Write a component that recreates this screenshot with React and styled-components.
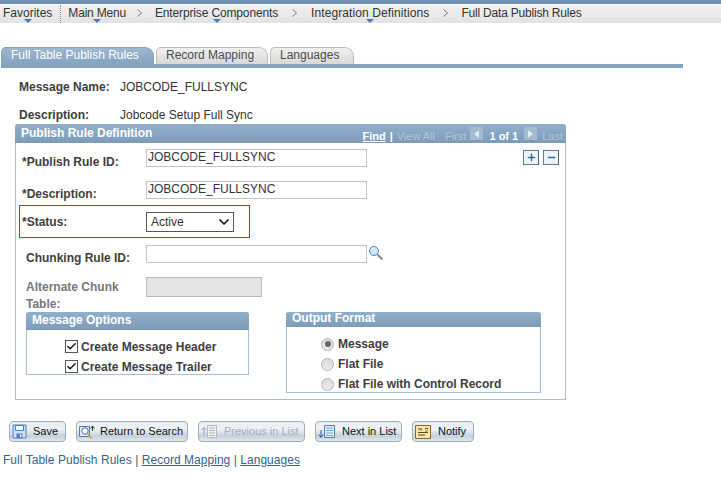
import React from 'react';
import styled, { createGlobalStyle } from 'styled-components';
import { Check, ChevronDown, Minus, Plus } from 'lucide-react';

const GlobalStyle = createGlobalStyle`
  html, body {
    margin: 0;
    padding: 0;
    background: #fff;
    font-family: "Liberation Sans", Arial, sans-serif;
    font-size: 12px;
    color: #333;
  }
`;

const Page = styled.div`
  width: 721px;
  height: 477px;
  overflow: hidden;
`;

const TopStrip = styled.div`
  height: 4px;
  background: #6d90b6;
  border-bottom: 1px solid #fff;
`;

const Nav = styled.nav`
  display: flex;
  height: 18px;
  background: linear-gradient(#f2f2f2, #e2e2e2);
  align-items: flex-start;
`;

const NavItem = styled.div`
  position: relative;
  margin-left: ${p => p.$left}px;
  padding-top: 1px;
  line-height: 14px;
  letter-spacing: ${p => p.$spacing ?? 0}px;
  color: #333;
  white-space: nowrap;

  &::after {
    content: '';
    display: ${p => (p.$drop ? 'block' : 'none')};
    position: absolute;
    left: ${p => p.$drop}px;
    top: 14px;
    border-left: 4px solid transparent;
    border-right: 4px solid transparent;
    border-top: 4px solid #4d7cb5;
  }
`;

const NavDivider = styled.div`
  width: 0;
  height: 18px;
  margin-left: 8px;
  border-left: 1px dotted #888;
`;

const Chevron = styled.svg`
  flex: none;
  width: 5px;
  height: 8px;
  margin: 4px 0 0 ${p => p.$left}px;
  fill: none;
  stroke: #6f7780;
`;

const TabRow = styled.div`
  display: flex;
  gap: 2px;
  margin: 24px 0 0 1px;
  height: 17px;
`;

const Tab = styled.div`
  width: ${p => p.$width}px;
  height: 17px;
  box-sizing: border-box;
  padding-left: 9px;
  line-height: 15px;
  border-radius: 5px 9px 0 0;
  white-space: nowrap;
  color: ${p => (p.$active ? '#fff' : '#4d4d4d')};
  background: ${p =>
    p.$active ? 'linear-gradient(#9cb7cf, #86a4bf)' : 'linear-gradient(#f0f0f0, #d8d8d8)'};
  border: 1px solid ${p => (p.$active ? '#86a4bf' : '#bdbdbd')};
  border-bottom: 0;
`;

const TabLine = styled.div`
  width: 682px;
  margin-left: 1px;
  height: 4px;
  background: #86a4bf;
`;

const InfoRow = styled.div`
  display: flex;
  padding-left: 19px;
  height: 14px;
  line-height: 14px;
  margin-top: ${p => p.$top}px;
`;

const InfoLabel = styled.div`
  width: 101px;
  font-weight: bold;
  color: #3e3e3e;
`;

const Panel = styled.section`
  width: 551px;
  height: 276px;
  box-sizing: border-box;
  margin: 2px 0 0 15px;
  border: 1px solid #a8bfd8;
  border-top: 0;
  border-radius: 3px 3px 0 0;
`;

const PanelHeader = styled.div`
  display: flex;
  align-items: center;
  justify-content: space-between;
  height: 19px;
  margin: 0 -1px;
  padding: 0 3px 1px 6px;
  box-sizing: border-box;
  border-radius: 3px 3px 0 0;
  background: linear-gradient(#92afc9, #7c9cba);
  color: #fff;
  font-weight: bold;
  line-height: 14px;
`;

const Pager = styled.div`
  position: relative;
  display: flex;
  align-items: center;
  top: 3px;
  font-size: 11px;
  font-weight: normal;
  color: #b4c4d4;
  white-space: nowrap;
`;

const PagerFind = styled.span`
  color: #fff;
  font-weight: bold;
  text-decoration: underline;
`;

const PagerSep = styled.span`
  color: #fff;
  font-weight: bold;
  margin: 0 4px 0 4px;
`;

const PagerGap = styled.span`
  margin-left: ${p => p.$left}px;
`;

const PagerCount = styled.span`
  color: #fff;
  font-weight: bold;
  margin: 0 6px;
`;

const PagerArrow = styled.span`
  display: flex;
  align-items: center;
  justify-content: center;
  width: 13px;
  height: 13px;
  margin: -5px 0 0 ${p => p.$left ?? 0}px;
  background: #a3bacf;

  &::after {
    content: '';
    border-top: 4px solid transparent;
    border-bottom: 4px solid transparent;
    ${p =>
      p.$dir === 'left'
        ? 'border-right: 5px solid #e2eaf1;'
        : 'border-left: 5px solid #e2eaf1;'}
  }
`;

const FieldRow = styled.div`
  position: relative;
  display: flex;
  align-items: flex-start;
  height: ${p => p.$height}px;
  margin-top: ${p => p.$top ?? 0}px;
`;

const FieldLabel = styled.div`
  width: 130px;
  flex: none;
  box-sizing: border-box;
  padding-left: ${p => (p.$required ? 6 : 10)}px;
  font-weight: bold;
  color: ${p => (p.$muted ? '#777' : '#3e3e3e')};
  line-height: 17px;
  position: relative;
  top: ${p => p.$shift ?? 0}px;
`;

const LabelText = styled.div`
  width: 100px;
`;

const TextField = styled.div`
  width: ${p => p.$width}px;
  height: ${p => p.$height}px;
  box-sizing: border-box;
  padding-left: 1px;
  border: 1px solid ${p => (p.$disabled ? '#bbb' : '#c4c4c4')};
  background: ${p => (p.$disabled ? '#e4e4e4' : '#fff')};
  color: #333;
  line-height: 15px;
`;

const RowButtons = styled.div`
  position: absolute;
  top: 1px;
  right: 6px;
  display: flex;
  gap: 4px;
`;

const SquareButton = styled.div`
  display: flex;
  align-items: center;
  justify-content: center;
  width: 14px;
  height: 13px;
  border: 1px solid #5d7f96;
  border-right-color: #44637a;
  background: #eef3f7;
  color: #2f6fa8;
`;

const StatusBox = styled.div`
  display: flex;
  align-items: center;
  width: 231px;
  height: 33px;
  box-sizing: border-box;
  margin: 6px 0 0 3px;
  border: 1px solid #e0202c;
`;

const StatusLabel = styled(FieldLabel)`
  width: 126px;
  padding-left: 2px;
`;

const SelectBox = styled.div`
  display: flex;
  align-items: center;
  justify-content: space-between;
  width: 88px;
  height: 20px;
  box-sizing: border-box;
  padding: 0 1px 0 4px;
  border: 1px solid #555;
  color: #333;
`;

const SelectText = styled.span`
  padding-top: 1px;
`;

const GroupRow = styled.div`
  display: flex;
  align-items: flex-start;
  margin: 15px 0 0 10px;
`;

const Group = styled.div`
  width: ${p => p.$width}px;
  height: ${p => p.$height}px;
  margin-left: ${p => p.$left ?? 0}px;
  box-sizing: border-box;
  border: 1px solid #a8bfd8;
  border-top: 0;
  border-radius: 3px 3px 0 0;
`;

const GroupHeader = styled.div`
  height: ${p => p.$height}px;
  margin: 0 -1px;
  padding-left: 6px;
  border-radius: 3px 3px 0 0;
  background: linear-gradient(#92afc9, #7c9cba);
  color: #fff;
  font-weight: bold;
  line-height: ${p => p.$height - 2}px;
`;

const OptionList = styled.div`
  display: flex;
  flex-direction: column;
  padding: ${p => p.$top}px 0 0 ${p => p.$left}px;
  gap: ${p => p.$gap}px;
`;

const Option = styled.div`
  display: flex;
  align-items: center;
  gap: ${p => p.$gap ?? 3}px;
  height: 14px;
  font-weight: bold;
  color: #3e3e3e;
  white-space: nowrap;
`;

const CheckMark = styled.span`
  display: flex;
  align-items: center;
  justify-content: center;
  width: 13px;
  height: 13px;
  margin-bottom: 2px;
  box-sizing: border-box;
  border: 1px solid #555;
  background: #fff;
  color: #111;
`;

const Radio = styled.span`
  display: flex;
  align-items: center;
  justify-content: center;
  width: 11px;
  height: 11px;
  margin-right: 1px;
  border: 1px solid #b3b3b3;
  border-radius: 50%;
  background: linear-gradient(#dcdcdc, #ececec);

  &::after {
    content: '';
    display: ${p => (p.$on ? 'block' : 'none')};
    width: 6px;
    height: 6px;
    border-radius: 50%;
    background: #666;
  }
`;

const Toolbar = styled.div`
  display: flex;
  gap: 10px;
  margin: 21px 0 0 9px;
`;

const ToolButton = styled.div`
  display: flex;
  align-items: center;
  width: ${p => p.$width}px;
  height: 21px;
  box-sizing: border-box;
  padding-left: 2px;
  border: 1px solid #a3adb8;
  border-radius: 4px;
  background: linear-gradient(#e8edf3 0%, #eef2f6 35%, #c7d1dd 75%, #e3e8ee 100%);
  color: ${p => (p.$disabled ? '#a8adb3' : '#111')};
  white-space: nowrap;
  font-size: 11px;
`;

const ToolLabel = styled.span`
  margin: 0 0 2px ${p => p.$gap}px;
`;

const FooterLinks = styled.div`
  margin: 11px 0 0 3px;
  line-height: 14px;
  letter-spacing: 0.04px;
  color: #3a5f8c;
`;

const FooterLink = styled.a`
  color: #3a5f8c;
  text-decoration: underline;
`;

const LookupSlot = styled.span`
  display: flex;
  margin-left: 1px;
`;

const NavChevron = ({ left }) => (
  <Chevron $left={left} viewBox="0 0 5 8">
    <path d="M.5 .5L4.500 4 .5 7.500" />
  </Chevron>
);

const SaveIcon = () => (
  <svg width="15" height="15" viewBox="0 0 15 15">
    <path d="M1 1h13v13H1z" fill="#cfe0f5" stroke="#4a7fc4" />
    <path d="M3.500 1.500h8v5h-8z" fill="#fff" stroke="#4a7fc4" />
    <path d="M4.500 9.500h6v4.500h-6z" fill="#4a7fc4" />
    <path d="M8 10.500h1.500v2.500H8z" fill="#fff" />
  </svg>
);

const SearchIcon = () => (
  <svg width="17" height="16" viewBox="0 0 17 16">
    <path d="M.5 2.500h10v10H.5z" fill="#dfe9f7" stroke="#4a7fc4" />
    <circle cx="6" cy="7" r="3.200" fill="#fff" stroke="#4a6f96" />
    <path d="M8.500 9.500l4 5" stroke="#c9a14a" strokeWidth="2" />
    <path d="M13.500 7V2.500M11.500 4.500l2-2.500 2 2.500" fill="none" stroke="#333" />
  </svg>
);

const PrevIcon = () => (
  <svg width="17" height="15" viewBox="0 0 17 15">
    <path d="M6.500 1.500h9v12h-9z" fill="#eef0f2" stroke="#b5b9bd" />
    <path d="M8 4h6M8 6.500h6M8 9h6M8 11.500h6" stroke="#b5b9bd" />
    <path d="M3 11V4M1 6l2-3 2 3" fill="none" stroke="#a5a9ad" />
  </svg>
);

const NextIcon = () => (
  <svg width="18" height="15" viewBox="0 0 18 15">
    <path d="M6.500 1.500h10v12h-10z" fill="#e3edfa" stroke="#4a7fc4" />
    <path d="M8 4h7M8 6.500h7M8 9h7M8 11.500h7" stroke="#7ba4d8" />
    <path d="M3 6v7M1 10.500l2 3 2-3" fill="none" stroke="#2b5d99" />
  </svg>
);

const NotifyIcon = () => (
  <svg width="16" height="14" viewBox="0 0 16 14">
    <path d="M.5 .5h15v13H.5z" fill="#f4e7a8" stroke="#8a6a2c" />
    <path d="M3 4h4l-1 1.500M10 3.500h3M3 7.500h10M3 10h7" fill="none" stroke="#6b4a1e" />
    <path d="M10 5.500l1.500 1L13 4.500" fill="none" stroke="#4f9a3a" />
  </svg>
);

const LookupIcon = () => (
  <svg width="16" height="16" viewBox="0 0 16 16">
    <circle cx="6" cy="6" r="4.500" fill="#cfe6f8" stroke="#4d86b8" />
    <path d="M3.500 5a2.500 2.500 0 0 1 2.500-2" fill="none" stroke="#fff" />
    <path d="M9.500 9.500l5 5" stroke="#8a8f94" strokeWidth="2.200" />
  </svg>
);

const App = () => {
  return (
    <Page>
      <GlobalStyle />
      <TopStrip />
      <Nav>
        <NavItem $left={3} $drop={21}>Favorites</NavItem>
        <NavDivider />
        <NavItem $left={7} $drop={25} $spacing={-0.2}>Main Menu</NavItem>
        <NavChevron left={11} />
        <NavItem $left={13} $drop={58} $spacing={-0.14}>Enterprise Components</NavItem>
        <NavChevron left={14} />
        <NavItem $left={14} $drop={55} $spacing={0.1}>Integration Definitions</NavItem>
        <NavChevron left={14} />
        <NavItem $left={13} $spacing={-0.2}>Full Data Publish Rules</NavItem>
      </Nav>

      <TabRow>
        <Tab $active $width={153}>Full Table Publish Rules</Tab>
        <Tab $width={112}>Record Mapping</Tab>
        <Tab $width={84}>Languages</Tab>
      </TabRow>
      <TabLine />

      <InfoRow $top={12}>
        <InfoLabel>Message Name:</InfoLabel>
        <span>JOBCODE_FULLSYNC</span>
      </InfoRow>
      <InfoRow $top={14}>
        <InfoLabel>Description:</InfoLabel>
        <span>Jobcode Setup Full Sync</span>
      </InfoRow>

      <Panel>
        <PanelHeader>
          <span>Publish Rule Definition</span>
          <Pager>
            <PagerFind>Find</PagerFind>
            <PagerSep>|</PagerSep>
            View All
            <PagerGap $left={10}>First</PagerGap>
            <PagerArrow $dir="left" $left={4} />
            <PagerCount>1 of 1</PagerCount>
            <PagerArrow $dir="right" />
            <PagerGap $left={5}>Last</PagerGap>
          </Pager>
        </PanelHeader>

        <FieldRow $top={6} $height={18}>
          <FieldLabel $required $shift={5}>*Publish Rule ID:</FieldLabel>
          <TextField $width={221} $height={18}>JOBCODE_FULLSYNC</TextField>
          <RowButtons>
            <SquareButton><Plus size={11} strokeWidth={3} /></SquareButton>
            <SquareButton><Minus size={11} strokeWidth={3} /></SquareButton>
          </RowButtons>
        </FieldRow>
        <FieldRow $top={14} $height={18}>
          <FieldLabel $required $shift={5}>*Description:</FieldLabel>
          <TextField $width={221} $height={18}>JOBCODE_FULLSYNC</TextField>
        </FieldRow>

        <StatusBox>
          <StatusLabel $shift={1}>*Status:</StatusLabel>
          <SelectBox>
            <SelectText>Active</SelectText>
            <ChevronDown size={16} strokeWidth={2.5} color="#111" />
          </SelectBox>
        </StatusBox>

        <FieldRow $top={7} $height={18}>
          <FieldLabel $shift={5}>Chunking Rule ID:</FieldLabel>
          <TextField $width={221} $height={18} />
          <LookupSlot><LookupIcon /></LookupSlot>
        </FieldRow>
        <FieldRow $top={14} $height={20}>
          <FieldLabel $muted $shift={2}><LabelText>Alternate Chunk Table:</LabelText></FieldLabel>
          <TextField $disabled $width={116} $height={20} />
        </FieldRow>

        <GroupRow>
          <Group $width={223} $height={63}>
            <GroupHeader $height={18}>Message Options</GroupHeader>
            <OptionList $left={38} $top={10} $gap={6}>
              <Option $gap={3}><CheckMark><Check size={11} strokeWidth={3} /></CheckMark>Create Message Header</Option>
              <Option $gap={3}><CheckMark><Check size={11} strokeWidth={3} /></CheckMark>Create Message Trailer</Option>
            </OptionList>
          </Group>
          <Group $left={37} $width={255} $height={81}>
            <GroupHeader $height={15}>Output Format</GroupHeader>
            <OptionList $left={34} $top={10} $gap={6}>
              <Option><Radio $on />Message</Option>
              <Option><Radio />Flat File</Option>
              <Option><Radio />Flat File with Control Record</Option>
            </OptionList>
          </Group>
        </GroupRow>
      </Panel>

      <Toolbar>
        <ToolButton $width={57}><SaveIcon /><ToolLabel $gap={6}>Save</ToolLabel></ToolButton>
        <ToolButton $width={112}><SearchIcon /><ToolLabel $gap={4}>Return to Search</ToolLabel></ToolButton>
        <ToolButton $disabled $width={107}><PrevIcon /><ToolLabel $gap={6}>Previous in List</ToolLabel></ToolButton>
        <ToolButton $width={87}><NextIcon /><ToolLabel $gap={6}>Next in List</ToolLabel></ToolButton>
        <ToolButton $width={62}><NotifyIcon /><ToolLabel $gap={7}>Notify</ToolLabel></ToolButton>
      </Toolbar>

      <FooterLinks>
        Full Table Publish Rules | <FooterLink href="#record">Record Mapping</FooterLink> | <FooterLink href="#languages">Languages</FooterLink>
      </FooterLinks>
    </Page>
  );
};

export default App;
